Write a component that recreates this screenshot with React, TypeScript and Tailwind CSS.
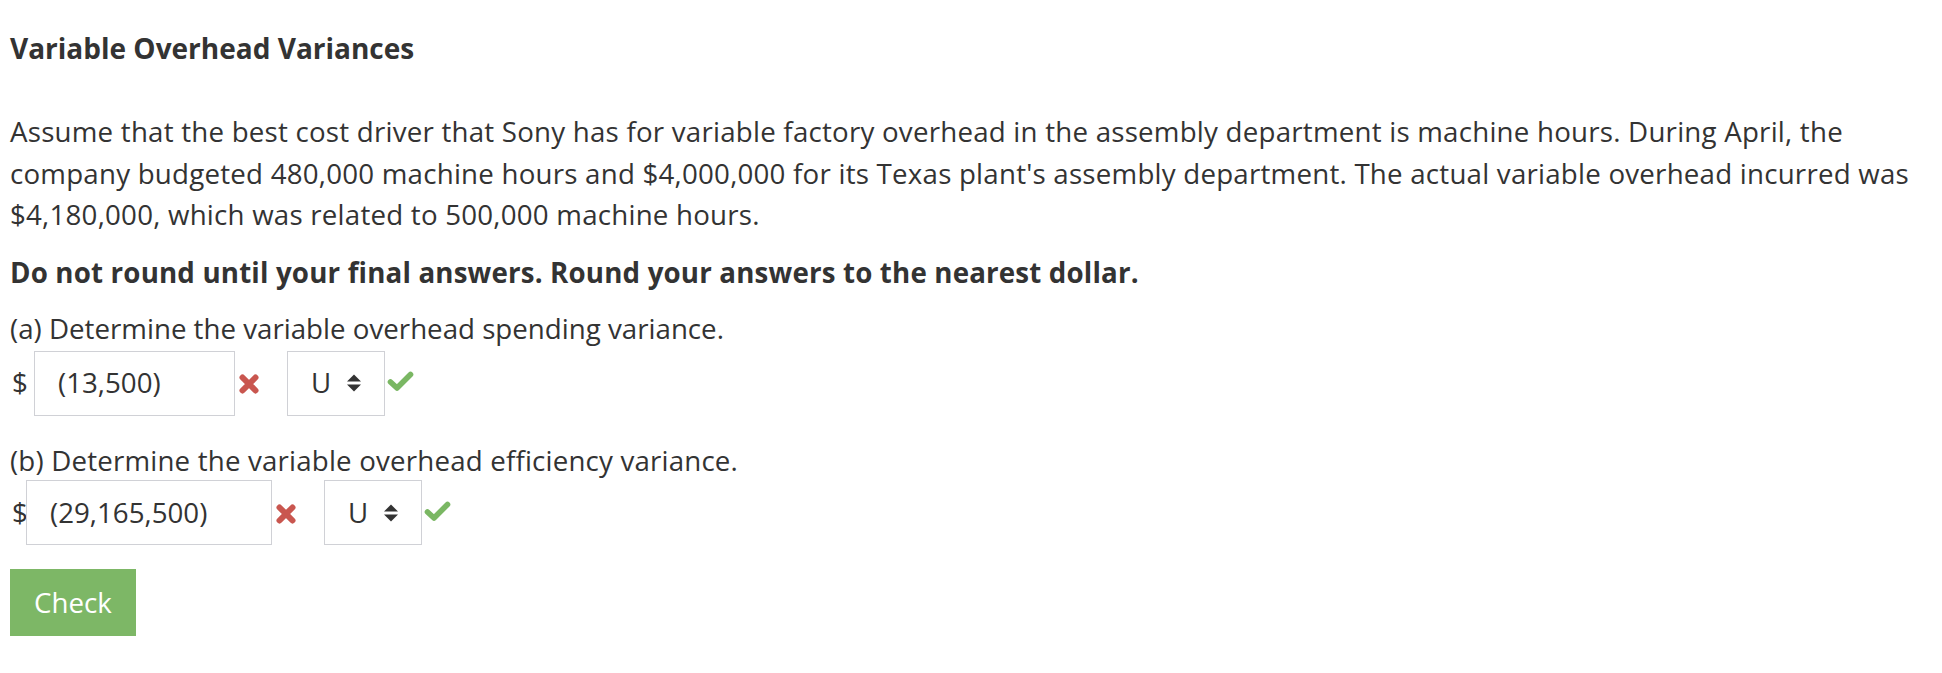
import React from "react";

const XIcon = () => (
  <svg width="20" height="20" viewBox="0 0 20 20" className="shrink-0">
    <path d="M3.5 3.5 L16.5 16.5 M16.5 3.5 L3.5 16.5" stroke="#c9564f" strokeWidth="6" strokeLinecap="round" />
  </svg>
);

const CheckIcon = () => (
  <svg width="27" height="22" viewBox="0 0 27 22" className="shrink-0">
    <path d="M3.5 12 L10 18 L23.5 4.5" stroke="#7ab763" strokeWidth="5.6" fill="none" strokeLinecap="round" strokeLinejoin="round" />
  </svg>
);

const SortIcon = () => (
  <svg width="16" height="18" viewBox="0 0 16 18" className="shrink-0">
    <path d="M1 7.5 L8 0.5 L15 7.5 Z" fill="#333" />
    <path d="M1 10.5 L8 17.5 L15 10.5 Z" fill="#333" />
  </svg>
);

function AnswerRow({ value, inputW, gapL, top }: { value: string; inputW: string; gapL: string; top: string }) {
  return (
    <div className={`flex items-center ${top}`}>
      <span className="w-[14px] pl-[2px] leading-[41.7px]">$</span>
      <div className={`${gapL} ${inputW} h-[65px] border border-[#d0d1d6] flex items-center pl-[23px] bg-white`}>
        <span>{value}</span>
      </div>
      <div className="ml-[4px] mt-[2px]">
        <XIcon />
      </div>
      <div className="ml-[28px] w-[98px] h-[65px] border border-[#d0d1d6] flex items-center pl-[23px] gap-[15px]">
        <span>U</span>
        <SortIcon />
      </div>
      <div className="ml-[2px] mb-[4px]">
        <CheckIcon />
      </div>
    </div>
  );
}

export default function App() {
  return (
    <div
      className="bg-white text-[#333333] text-[27.7px] leading-[41.7px] pl-[10px] pr-[4px] pt-[28px] pb-[30px] w-[1942px] min-h-[673px]"
      style={{ fontFamily: '"Open Sans", sans-serif' }}
    >
      <h1 className="font-bold text-[28px] leading-[40px]">Variable Overhead Variances</h1>
      <p className="mt-[43px] tracking-[0.22px] whitespace-nowrap">
        Assume that the best cost driver that Sony has for variable factory overhead in the assembly department is machine hours. During April, the
        <br />
        company budgeted 480,000 machine hours and $4,000,000 for its Texas plant's assembly department. The actual variable overhead incurred was
        <br />
        $4,180,000, which was related to 500,000 machine hours.
      </p>
      <p className="mt-[16px] font-bold tracking-[0.17px]">Do not round until your final answers. Round your answers to the nearest dollar.</p>
      <p className="mt-[14px]">(a) Determine the variable overhead spending variance.</p>
      <AnswerRow value="(13,500)" inputW="w-[201px]" gapL="ml-[10px]" top="mt-[1px]" />
      <p className="mt-[24px] tracking-[0.18px]">(b) Determine the variable overhead efficiency variance.</p>
      <AnswerRow value="(29,165,500)" inputW="w-[246px]" gapL="ml-[2px]" top="mt-[-1px]" />
      <button className="mt-[24px] w-[126px] h-[67px] bg-[#7db766] text-white flex items-center justify-center">
        Check
      </button>
    </div>
  );
}
